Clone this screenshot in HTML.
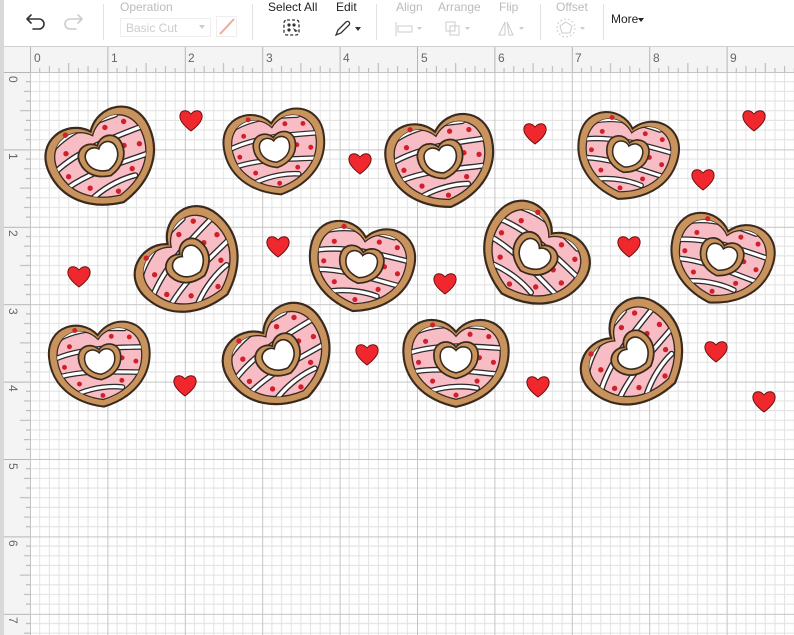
<!DOCTYPE html>
<html><head><meta charset="utf-8"><style>
html,body{margin:0;padding:0;width:794px;height:635px;overflow:hidden;background:#fff;font-family:"Liberation Sans",sans-serif}
.t{position:absolute;font-size:12px;color:#bbb;white-space:nowrap}
.k{color:#222}
.dv{position:absolute;top:4px;width:1px;height:36px;background:#e2e2e2}
</style></head><body>
<div style="position:absolute;left:0;top:0;width:4px;height:635px;background:#d8d8d8"></div>
<div style="position:absolute;left:4px;top:0;width:790px;height:46px;background:#fff;border-bottom:1px solid #cfcfcf"></div>
<svg style="position:absolute;left:0;top:0" width="794" height="46">
 <path d="M27 19 L31 15 M27 19 L31 23 M27 19 H39 a5 5 0 0 1 0 10 H33" fill="none" stroke="#333" stroke-width="1.6" stroke-linecap="round"/>
 <path d="M82 19 L78 15 M82 19 L78 23 M82 19 H70 a5 5 0 0 0 0 10 H76" fill="none" stroke="#ccc" stroke-width="1.6" stroke-linecap="round"/>
 <rect x="120.5" y="18.5" width="90" height="18" fill="none" stroke="#eee"/>
 <path d="M199 25 l3 4 l3 -4z" fill="#ccc"/>
 <rect x="216.5" y="16.5" width="20" height="20" fill="none" stroke="#eee"/>
 <path d="M220 34 L234 19" stroke="#f0a898" stroke-width="2"/>
 <rect x="284" y="20" width="15" height="15" rx="3" fill="none" stroke="#333" stroke-width="1.3" stroke-dasharray="3 2"/>
 <circle cx="289" cy="25" r="1.6" fill="#333"/><circle cx="294" cy="25" r="1.6" fill="#333"/><circle cx="289" cy="30" r="1.6" fill="#333"/><path d="M293 28 l5 3 l-3 1z" fill="#333"/>
 <path d="M336 35 l2 -5 l8 -8 a2 2 0 0 1 3 3 l-8 8 z" fill="none" stroke="#333" stroke-width="1.3"/>
 <path d="M355 27 l3 4 l3 -4z" fill="#333"/>
 <rect x="398" y="26" width="14" height="6" fill="none" stroke="#ccc"/><path d="M396 22 v14" stroke="#ccc"/><path d="M417 27 l2.5 3 l2.5 -3z" fill="#ccc"/>
 <rect x="446" y="22" width="9" height="9" fill="none" stroke="#ccc"/><rect x="450" y="26" width="9" height="9" fill="none" stroke="#ccc"/><path d="M465 27 l2.5 3 l2.5 -3z" fill="#ccc"/>
 <path d="M499 35 l6 -13 v13z M509 35 l-2 -13 l6 13z" fill="none" stroke="#ccc"/><path d="M519 27 l2.5 3 l2.5 -3z" fill="#ccc"/>
 <path d="M566 22 l6 4 l-2 7 h-8 l-2 -7z" fill="none" stroke="#ccc"/><circle cx="566" cy="28" r="9" fill="none" stroke="#ccc" stroke-dasharray="2 2"/><path d="M580 27 l2.5 3 l2.5 -3z" fill="#ccc"/>
 <path d="M638 18 l3 4 l3 -4z" fill="#222"/>
</svg>
<div class="dv" style="left:103px"></div><div class="dv" style="left:252px"></div><div class="dv" style="left:376px"></div><div class="dv" style="left:540px"></div><div class="dv" style="left:603px"></div>
<div class="t" style="left:120px;top:0px">Operation</div>
<div class="t" style="left:126px;top:21px;color:#ccc">Basic Cut</div>
<div class="t k" style="left:268px;top:0px">Select All</div>
<div class="t k" style="left:336px;top:0px">Edit</div>
<div class="t" style="left:396px;top:0px">Align</div>
<div class="t" style="left:438px;top:0px">Arrange</div>
<div class="t" style="left:499px;top:0px">Flip</div>
<div class="t" style="left:556px;top:0px">Offset</div>
<div class="t k" style="left:611px;top:12px">More</div>

<svg style="position:absolute;left:4px;top:47px" width="790" height="588" viewBox="4 47 790 588">
<defs>
 <pattern id="g" x="30" y="72" width="77.4" height="77.4" patternUnits="userSpaceOnUse">
  <path d="M9.675 0V77.4M19.35 0V77.4M29.025 0V77.4M38.7 0V77.4M48.375 0V77.4M58.05 0V77.4M67.725 0V77.4M0 9.675H77.4M0 19.35H77.4M0 29.025H77.4M0 38.7H77.4M0 48.375H77.4M0 58.05H77.4M0 67.725H77.4" stroke="#e2e2e2" stroke-width="1"/>
  <path d="M0.5 0V77.4M0 0.5H77.4" stroke="#c4c4c4" stroke-width="1"/>
 </pattern>
 <pattern id="tx" x="30" y="47" width="77.4" height="25" patternUnits="userSpaceOnUse">
  <path d="M0.5 0V25M9.675 21V25M19.35 19V25M29.025 21V25M38.7 16V25M48.375 21V25M58.05 19V25M67.725 21V25" stroke="#b5b5b5"/>
 </pattern>
 <pattern id="ty" x="4" y="72" width="26" height="77.4" patternUnits="userSpaceOnUse">
  <path d="M0 0.5H26M22 9.675H26M20 19.35H26M22 29.025H26M16 38.7H26M22 48.375H26M20 58.05H26M22 67.725H26" stroke="#b5b5b5"/>
 </pattern>
 <path id="hp" d="M50 90 C22 84 5 66 5 42 C5 14 36 8 50 26 C64 8 95 14 95 42 C95 66 78 84 50 90Z"/>
 <clipPath id="ic"><use href="#hp" transform="translate(50 50) scale(0.84) translate(-50 -50)"/></clipPath>
 <g id="d">
  <use href="#hp" fill="#c8935c" stroke="#3a2a1e" stroke-width="1.8"/>
  <use href="#hp" transform="translate(50 50) scale(0.84) translate(-50 -50)" fill="#f8bcc4" stroke="#3a2a1e" stroke-width="1.3"/>
  <g clip-path="url(#ic)" fill="none" stroke-linecap="round">
   <path d="M16 26 C34 18 56 20 74 22 M10 44 C34 36 64 38 90 40 M14 60 C36 56 62 60 84 62 M30 76 C44 72 58 72 68 74" stroke="#2a2a2a" stroke-width="5"/>
   <path d="M16 26 C34 18 56 20 74 22 M10 44 C34 36 64 38 90 40 M14 60 C36 56 62 60 84 62 M30 76 C44 72 58 72 68 74" stroke="#fff" stroke-width="2.8"/>
  </g>
  <g fill="#d0202a">
   <circle cx="30" cy="20" r="2.2"/><circle cx="62" cy="28" r="2.2"/><circle cx="24" cy="34" r="2.2"/><circle cx="78" cy="30" r="2.2"/><circle cx="18" cy="52" r="2.2"/><circle cx="82" cy="52" r="2.2"/><circle cx="70" cy="48" r="2.2"/><circle cx="30" cy="68" r="2.2"/><circle cx="68" cy="68" r="2.2"/><circle cx="50" cy="80" r="2.2"/>
  </g>
  <use href="#hp" transform="translate(50 49) scale(0.42) translate(-50 -50)" fill="#c8935c" stroke="#3a2a1e" stroke-width="3.5"/>
  <use href="#hp" transform="translate(50 49) scale(0.3) translate(-50 -50)" fill="#fff" stroke="#3a2a1e" stroke-width="4.5"/>
 </g>
 <path id="sh" d="M12 22 C4 16 0 11 1 6 C2 1 8 0 12 5 C16 0 22 1 23 6 C24 11 20 16 12 22Z" fill="#f0282e" stroke="#6a1010" stroke-width="1"/>
</defs>
<rect x="4" y="47" width="790" height="25" fill="#f4f4f4"/>
<rect x="4" y="47" width="26" height="588" fill="#f4f4f4"/>
<rect x="30" y="47" width="764" height="25" fill="url(#tx)"/>
<rect x="4" y="72" width="26" height="563" fill="url(#ty)"/>
<rect x="30" y="72" width="764" height="563" fill="url(#g)"/>
<g font-size="12" fill="#666" font-family="Liberation Sans,sans-serif">
 <text x="34" y="62">0</text><text x="111" y="62">1</text><text x="188" y="62">2</text><text x="266" y="62">3</text><text x="343" y="62">4</text><text x="421" y="62">5</text><text x="498" y="62">6</text><text x="575" y="62">7</text><text x="653" y="62">8</text><text x="730" y="62">9</text>
 <g transform="rotate(90)">
  <text x="76" y="-9">0</text><text x="153" y="-9">1</text><text x="230" y="-9">2</text><text x="308" y="-9">3</text><text x="385" y="-9">4</text><text x="463" y="-9">5</text><text x="540" y="-9">6</text><text x="617" y="-9">7</text>
 </g>
</g>
<use href="#d" transform="translate(103 158) rotate(-25) scale(1.22) translate(-50 -50)"/>
<use href="#d" transform="translate(275 150) rotate(-8) scale(1.12) translate(-50 -50)"/>
<use href="#d" transform="translate(441 160) rotate(-12) scale(1.2) translate(-50 -50)"/>
<use href="#d" transform="translate(627 155) rotate(12) scale(1.12) translate(-50 -50)"/>
<use href="#d" transform="translate(190 263) rotate(-50) scale(1.22) translate(-50 -50)"/>
<use href="#d" transform="translate(361 265) rotate(10) scale(1.17) translate(-50 -50)"/>
<use href="#d" transform="translate(533 256) rotate(40) scale(1.22) translate(-50 -50)"/>
<use href="#d" transform="translate(721 258) rotate(15) scale(1.15) translate(-50 -50)"/>
<use href="#d" transform="translate(100 362) rotate(-5) scale(1.12) translate(-50 -50)"/>
<use href="#d" transform="translate(280 357) rotate(-35) scale(1.22) translate(-50 -50)"/>
<use href="#d" transform="translate(456 360) rotate(0) scale(1.17) translate(-50 -50)"/>
<use href="#d" transform="translate(635 355) rotate(-55) scale(1.22) translate(-50 -50)"/>
<g>
 <use href="#sh" transform="translate(179 109)"/>
 <use href="#sh" transform="translate(348 152)"/>
 <use href="#sh" transform="translate(266 235)"/>
 <use href="#sh" transform="translate(67 265)"/>
 <use href="#sh" transform="translate(523 122)"/>
 <use href="#sh" transform="translate(691 168)"/>
 <use href="#sh" transform="translate(617 235)"/>
 <use href="#sh" transform="translate(742 109)"/>
 <use href="#sh" transform="translate(433 272)"/>
 <use href="#sh" transform="translate(355 343)"/>
 <use href="#sh" transform="translate(173 374)"/>
 <use href="#sh" transform="translate(526 375)"/>
 <use href="#sh" transform="translate(704 340)"/>
 <use href="#sh" transform="translate(752 390)"/>
</g>
</svg>
</body></html>
